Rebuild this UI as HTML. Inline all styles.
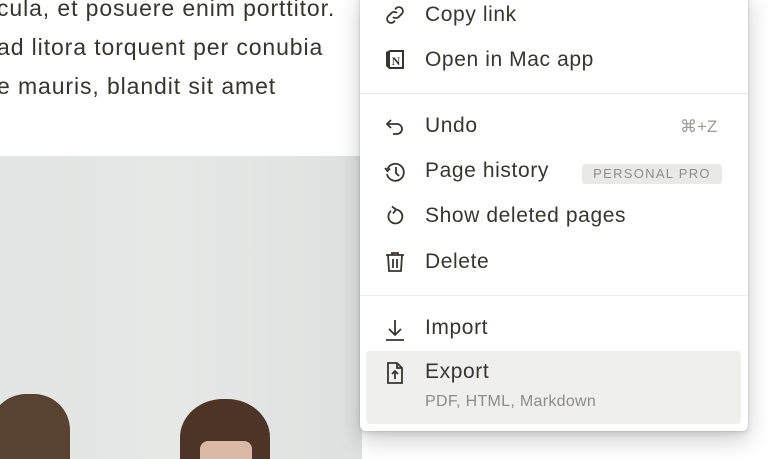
<!DOCTYPE html><html><head><style>
html,body{margin:0;width:768px;height:459px;overflow:hidden}
body{background:#fff;position:relative;font-family:"Liberation Sans",sans-serif;color:#37352f}
.t{position:absolute;left:-3px;font-size:23px;letter-spacing:0.9px;white-space:nowrap}
.img{position:absolute;left:0;top:156px;width:362px;height:303px;overflow:hidden;background:linear-gradient(90deg,#e2e5e3,#e6e8e7 50%,#dfe1e0)}
.menu{position:absolute;left:360px;top:-10px;width:388px;height:441px;background:#fff;border-radius:6px;box-shadow:0 0 0 1px rgba(15,15,15,.05),0 3px 6px rgba(15,15,15,.1),0 9px 24px rgba(15,15,15,.2)}
.it{position:absolute;left:425px;font-size:21px;letter-spacing:0.6px;color:#37352f}
.ic{position:absolute;left:383px;width:24px;height:24px}
.sep{position:absolute;left:360px;width:388px;height:1px;background:#ebebea}
</style></head><body>
<div class="t" style="top:-5px">cula, et posuere enim porttitor.</div>
<div class="t" style="top:34px">ad litora torquent per conubia</div>
<div class="t" style="top:73px">e mauris, blandit sit amet</div>
<div class="img">
<div style="position:absolute;left:-10px;top:238px;width:80px;height:80px;border-radius:45% 45% 0 0;background:#5a4232"></div>
<div style="position:absolute;left:180px;top:243px;width:90px;height:80px;border-radius:48% 48% 0 0;background:#4e3426"></div>
<div style="position:absolute;left:200px;top:285px;width:52px;height:30px;background:#d9b8a5;border-radius:8px 8px 0 0"></div>
</div>
<div class="menu"></div>
<div class="sep" style="top:93px"></div>
<div class="sep" style="top:295px"></div>
<div style="position:absolute;left:366px;top:351px;width:375px;height:73px;background:#efefee;border-radius:4px"></div>
<svg class="ic" style="top:3px" viewBox="0 0 24 24" fill="none" stroke="#37352f" stroke-width="1.8"><path d="M10 14a4 4 0 0 0 5.6 0l3.5-3.5a4 4 0 0 0-5.6-5.6L12 6.4"/><path d="M14 10a4 4 0 0 0-5.6 0l-3.5 3.5a4 4 0 0 0 5.6 5.6L12 17.6"/></svg>
<div class="it" style="top:3px">Copy link</div>
<svg class="ic" style="top:48px" viewBox="0 0 24 24"><path d="M3 4l4-2h14v19H6l-3-3z" fill="#37352f"/><rect x="7" y="4" width="12" height="15" fill="#fff"/><text x="13" y="17" font-size="12" font-weight="bold" font-family="Liberation Serif" text-anchor="middle" fill="#37352f">N</text></svg>
<div class="it" style="top:48px">Open in Mac app</div>
<svg class="ic" style="top:115px" viewBox="0 0 24 24" fill="none" stroke="#37352f" stroke-width="1.8"><path d="M8 5L4 9l4 4"/><path d="M4 9h10a5 5 0 0 1 0 10h-4"/></svg>
<div class="it" style="top:114px">Undo</div>
<div style="position:absolute;left:680px;top:117px;font-size:17px;color:#9b9a97">⌘+Z</div>
<svg class="ic" style="top:160px" viewBox="0 0 24 24" fill="none" stroke="#37352f" stroke-width="1.8"><path d="M4.5 9A8.5 8.5 0 1 1 4 14"/><path d="M2 8l2.5 3L7 8.5"/><path d="M13 7v6l3 3"/></svg>
<div class="it" style="top:159px">Page history</div>
<div style="position:absolute;left:582px;top:164px;width:140px;height:20px;background:#e9e9e7;border-radius:3px;font-size:13px;letter-spacing:1.3px;color:#8d8c88;text-align:center;line-height:20px">PERSONAL PRO</div>
<svg class="ic" style="top:205px" viewBox="0 0 24 24" fill="none" stroke="#37352f" stroke-width="1.8"><path d="M8 6a7 7 0 1 0 5-1.5"/><path d="M9 1.5l4 3-3 4"/></svg>
<div class="it" style="top:204px">Show deleted pages</div>
<svg class="ic" style="top:250px" viewBox="0 0 24 24" fill="none" stroke="#37352f" stroke-width="1.8"><path d="M3 5h18M9 5V3h6v2M5 5l1 16h12l1-16M10 9v9M14 9v9"/></svg>
<div class="it" style="top:250px">Delete</div>
<svg class="ic" style="top:318px" viewBox="0 0 24 24" fill="none" stroke="#37352f" stroke-width="1.8"><path d="M12 2v15M6 11l6 6 6-6M3 22h18"/></svg>
<div class="it" style="top:316px">Import</div>
<svg class="ic" style="top:361px" viewBox="0 0 24 24" fill="none" stroke="#37352f" stroke-width="1.8"><path d="M5 2h9l5 5v15H5z"/><path d="M14 2v5h5M12 18v-7M9 13l3-3 3 3"/></svg>
<div class="it" style="top:360px">Export</div>
<div style="position:absolute;left:425px;top:393px;font-size:16px;letter-spacing:0.3px;color:#8d8c88">PDF, HTML, Markdown</div>
</body></html>
